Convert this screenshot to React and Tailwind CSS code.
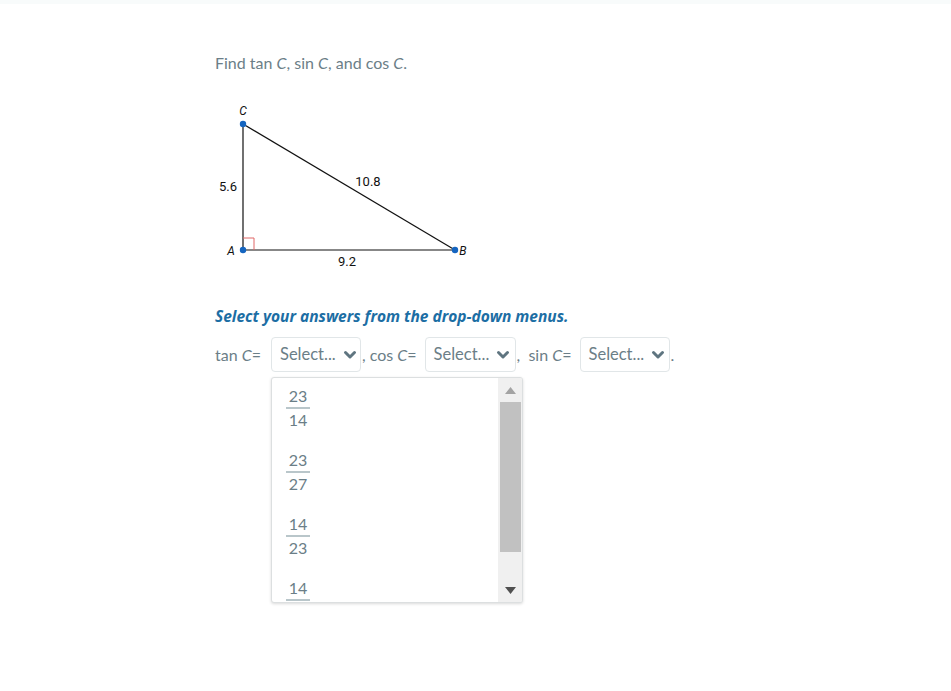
import React from "react";

const font = { fontFamily: "Lato, 'Open Sans', sans-serif" };

function Chevron() {
  return (
    <svg width="14" height="10" viewBox="0 0 14 10" className="ml-[7px]">
      <path d="M2.5 2.5 L7 7 L11.5 2.5" fill="none" stroke="#5f7580" strokeWidth="3" strokeLinecap="round" strokeLinejoin="round" />
    </svg>
  );
}

function SelectBox({ w, children }) {
  return (
    <div className={`relative h-[35px] ${w} border border-[#e1e6e8] rounded-[4px] flex items-center pl-[8px] text-[16.5px] text-[#6b7e87] bg-white`}>
      <span>Select...</span>
      <Chevron />
      {children}
    </div>
  );
}

function Frac({ n, d }) {
  return (
    <div className="flex flex-col items-center w-[24px] text-[16px] leading-none text-[#6b7e87]">
      <span className="pb-[3px]">{n}</span>
      <div className="w-[24px] h-[2px] bg-[#b9c6ca]" />
      <span className="pt-[3px]">{d}</span>
    </div>
  );
}

function Figure() {
  return (
    <svg width="280" height="180" viewBox="200 95 280 180" style={{ fontFamily: "Roboto, 'Liberation Sans', sans-serif" }}>
      <line x1="243" y1="125" x2="243" y2="251" stroke="#111" strokeWidth="1.2" />
      <line x1="243" y1="251" x2="455" y2="251" stroke="#111" strokeWidth="1.2" />
      <line x1="243" y1="125" x2="455" y2="251" stroke="#111" strokeWidth="1.2" />
      <polyline points="243,239 254,239 254,251" fill="none" stroke="#e06666" strokeWidth="1" />
      <circle cx="243" cy="125" r="3.2" fill="#1565c0" />
      <circle cx="243" cy="251" r="3.2" fill="#1565c0" />
      <circle cx="455" cy="251" r="3.2" fill="#1565c0" />
      <text x="243" y="116" fontSize="12" fontStyle="italic" textAnchor="middle" fill="#111">C</text>
      <text x="231" y="255.5" fontSize="12" fontStyle="italic" textAnchor="middle" fill="#111">A</text>
      <text x="463" y="255.5" fontSize="12" fontStyle="italic" textAnchor="middle" fill="#111">B</text>
      <text x="228" y="191.5" fontSize="13" textAnchor="middle" fill="#111">5.6</text>
      <text x="368" y="186.5" fontSize="13" textAnchor="middle" fill="#111">10.8</text>
      <text x="347" y="266.5" fontSize="13" textAnchor="middle" fill="#111">9.2</text>
    </svg>
  );
}

function Dropdown() {
  return (
    <div className="absolute left-[-1px] top-[39px] w-[252px] h-[226px] bg-white border border-[#dcdfe0] rounded-[3px] shadow-[0_1px_3px_rgba(0,0,0,0.15)] flex z-10 overflow-hidden">
      <div className="flex-1 flex flex-col pl-[14px] pt-[10px] gap-[24px] overflow-hidden">
        <Frac n="23" d="14" />
        <Frac n="23" d="27" />
        <Frac n="14" d="23" />
        <Frac n="14" d="" />
      </div>
      <div className="w-[24px] bg-[#f0f0f0] flex flex-col items-center">
        <div className="h-[24px] flex items-center justify-center">
          <svg width="11" height="7" viewBox="0 0 11 7"><path d="M5.5 0 L11 7 L0 7 Z" fill="#a3a3a3" /></svg>
        </div>
        <div className="w-[21px] h-[150px] bg-[#c1c1c1]" />
        <div className="flex-1" />
        <div className="h-[24px] flex items-center justify-center">
          <svg width="11" height="7" viewBox="0 0 11 7"><path d="M0 0 L11 0 L5.5 7 Z" fill="#505050" /></svg>
        </div>
      </div>
    </div>
  );
}

export default function App() {
  return (
    <div className="w-[951px] h-[691px] bg-white" style={font}>
      <div className="h-[4px] bg-[#f8fbfb]" />
      <div className="pl-[215px] pt-[48px]">
        <p className="text-[16px] leading-[22px] text-[#6b7e87]">
          Find tan <i>C</i>, sin <i>C</i>, and cos <i>C</i>.
        </p>
        <div className="ml-[-15px] mt-[20px]">
          <Figure />
        </div>
        <p className="mt-[31px] text-[15.5px] leading-[22px] font-bold italic text-[#1c6ea4]" style={{ fontFamily: "'Open Sans', sans-serif" }}>
          Select your answers from the drop-down menus.
        </p>
        <div className="mt-[10px] flex items-center text-[16px] text-[#6b7e87]">
          <span className="mr-[10px]">tan <i>C</i>=</span>
          <SelectBox w="w-[90px]"><Dropdown /></SelectBox>
          <span className="ml-[1px] mr-[8px]">, cos <i>C</i>=</span>
          <SelectBox w="w-[91px]" />
          <span className="ml-[1px] mr-[8px]">,&nbsp;&nbsp;sin <i>C</i>=</span>
          <SelectBox w="w-[90px]" />
          <span className="ml-[1px]">.</span>
        </div>
      </div>
    </div>
  );
}
